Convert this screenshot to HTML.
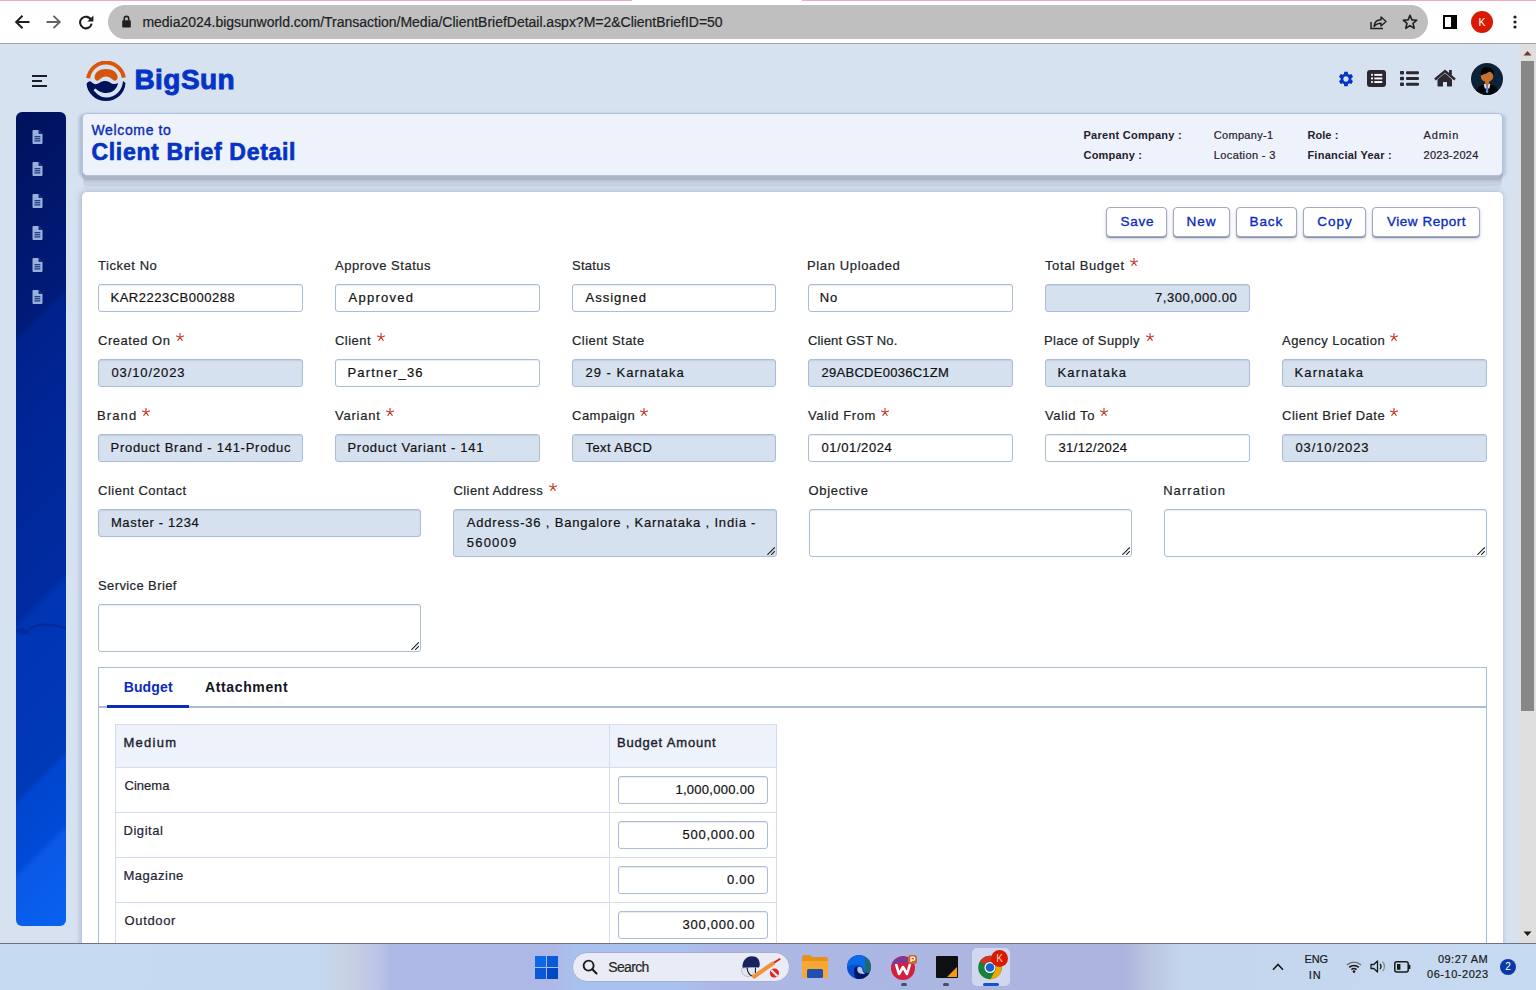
<!DOCTYPE html>
<html><head><meta charset="utf-8">
<style>
*{box-sizing:border-box}
html,body{margin:0;padding:0}
body{width:1536px;height:990px;overflow:hidden;position:relative;background:#d6e2f0;font-family:"Liberation Sans",sans-serif;color:#1f2433}
.a{position:absolute}
.t{position:absolute;white-space:nowrap;line-height:1;}
#chrome{left:0;top:0;width:1536px;height:44px;background:#fff;border-bottom:1px solid #a3a3a3}
#page{left:0;top:44px;width:1519px;height:899px;overflow:hidden;background:#d6e2f0}
</style></head>
<body>
<div id="page" class="a"><div class="a" style="left:0;top:-44px;width:1519px;height:943px">
<!-- hamburger -->
  <div class="a" style="left:32px;top:75px;width:15px;height:2px;background:#1c1b26"></div>
  <div class="a" style="left:32px;top:80px;width:10px;height:2px;background:#1c1b26"></div>
  <div class="a" style="left:32px;top:85px;width:15px;height:2px;background:#1c1b26"></div>
  <!-- logo -->
  <svg class="a" style="left:86px;top:61px" width="40" height="40" viewBox="0 0 40 40">
    <path d="M2.2 17.2 A18 18 0 0 1 37.8 16.6" fill="none" stroke="#d9560b" stroke-width="4"/>
    <path d="M8.6 16.5 C8.6 11.2 13.5 8 20 8 C26.5 8 31.6 11.2 31.6 16.5 C31.6 19 29.6 20 28 19.5 C26 18.8 24 15.6 20 15.6 C16 15.6 14 18.8 12.2 19.5 C10.6 20 8.6 19 8.6 16.5Z" fill="#d4560a"/>
    <path d="M0.5 23 C2 20.5 4 19.5 5.5 21 C8 23.5 10 24 14 21.5 C17 19.5 21 19.5 24 21.5 C27 23.5 29.5 23.5 32 22 C31.5 27 27 32 20 32 C15 32 11.5 29.5 9.5 27.5 L7.5 29 C10.5 33 15 36.5 20 36.5 C29.5 36.5 36.5 29 37 20 L39.5 22 C39 32.5 30.5 40 20 40 C9.5 40 1.5 32.5 0.5 23Z" fill="#00135a"/>
  </svg>
  
  <!-- right icons -->
  <svg class="a" style="left:1337px;top:70px" width="18" height="18" viewBox="0 0 24 24"><path fill="#0433c8" d="M19.14 12.94c.04-.3.06-.61.06-.94 0-.32-.02-.64-.07-.94l2.03-1.58a.49.49 0 0 0 .12-.61l-1.92-3.32a.488.488 0 0 0-.59-.22l-2.39.96c-.5-.38-1.03-.7-1.62-.94l-.36-2.54a.484.484 0 0 0-.48-.41h-3.84c-.24 0-.43.17-.47.41l-.36 2.54c-.59.24-1.13.57-1.62.94l-2.39-.96c-.22-.08-.47 0-.59.22L2.74 8.87c-.12.21-.08.47.12.61l2.03 1.58c-.05.3-.09.63-.09.94s.02.64.07.94l-2.03 1.58a.49.49 0 0 0-.12.61l1.92 3.32c.12.22.37.29.59.22l2.39-.96c.5.38 1.03.7 1.62.94l.36 2.54c.05.24.24.41.48.41h3.84c.24 0 .44-.17.47-.41l.36-2.54c.59-.24 1.13-.56 1.62-.94l2.39.96c.22.08.47 0 .59-.22l1.92-3.32c.12-.22.07-.47-.12-.61l-2.01-1.58zM12 15.6c-1.98 0-3.6-1.62-3.6-3.6s1.62-3.6 3.6-3.6 3.6 1.62 3.6 3.6-1.62 3.6-3.6 3.6z"/></svg>
  <svg class="a" style="left:1367px;top:70px" width="19" height="17" viewBox="0 0 19 17"><rect x="0" y="0" width="19" height="17" rx="3" fill="#2b2830"/><circle cx="5" cy="4.8" r="1.1" fill="#fff"/><circle cx="5" cy="8.4" r="1.1" fill="#fff"/><circle cx="5" cy="12" r="1.1" fill="#fff"/><rect x="7.3" y="3.9" width="8" height="1.9" fill="#fff"/><rect x="7.3" y="7.5" width="8" height="1.9" fill="#fff"/><rect x="7.3" y="11.1" width="8" height="1.9" fill="#fff"/></svg>
  <svg class="a" style="left:1400px;top:71px" width="19" height="15" viewBox="0 0 19 15"><rect x="0" y="0" width="4" height="3.5" rx=".8" fill="#2b2830"/><rect x="0" y="5.8" width="4" height="3.5" rx=".8" fill="#2b2830"/><rect x="0" y="11.5" width="4" height="3.5" rx=".8" fill="#2b2830"/><rect x="6" y="0.2" width="13" height="3" rx="1.2" fill="#2b2830"/><rect x="6" y="6" width="13" height="3" rx="1.2" fill="#2b2830"/><rect x="6" y="11.8" width="13" height="3" rx="1.2" fill="#2b2830"/></svg>
  <svg class="a" style="left:1434px;top:69px" width="22" height="18" viewBox="0 0 22 18"><path d="M1 10.5 L11 2 L21 10.5" fill="none" stroke="#2b2830" stroke-width="2.4"/><rect x="15" y="1" width="2.8" height="6" fill="#2b2830"/><path d="M3.5 10.5 L11 4.3 L18 10.5 V16.8 Q18 17.6 17.2 17.6 H13 V13 H9 V17.6 H4.3 Q3.5 17.6 3.5 16.8Z" fill="#2b2830"/></svg>
  <svg class="a" style="left:1471px;top:63px" width="32" height="32" viewBox="0 0 32 32">
    <defs><clipPath id="av"><circle cx="16" cy="16" r="16"/></clipPath></defs>
    <circle cx="16" cy="16" r="16" fill="#0b2239"/>
    <g clip-path="url(#av)">
      <path d="M4.5 33 C4.5 25.5 8 22.2 13 21.6 L19 21.6 C24 22.2 27.5 25.5 27.5 33Z" fill="#050505"/>
      <rect x="14" y="16" width="4.2" height="7" fill="#c46a2c"/>
      <path d="M12.8 21.2 L14.2 20.8 L16.1 24.5 L18 20.8 L19.3 21.2 L18.4 25.5 L13.8 25.5Z" fill="#e6e6e6"/>
      <path d="M15.2 22.5 H17 L17.4 29 L16.1 30.5 L14.8 29Z" fill="#5a8ad2"/>
      <ellipse cx="16" cy="13.4" rx="6.2" ry="5.4" fill="#c87030"/>
      <path d="M10 12.2 C9.2 6.5 12 4 16.2 4 C20.5 4 23.2 6.8 22.6 12 C21.6 9.8 20.2 8.6 18.6 8.4 C17.6 9.6 14.5 10.6 10 12.2Z" fill="#030303"/>
    </g>
  </svg>

  
<div id="t1" class="t" style="left:134.40px;top:66.00px;font-size:28px;color:#0433c8;font-weight:bold;letter-spacing:0.463px;-webkit-text-stroke:0.9px #0433c8;">BigSun</div>
<!-- sidebar -->
  <div class="a" style="left:16px;top:112px;width:50px;height:814px;border-radius:6px;background:linear-gradient(135deg,#00125c 0%,#00176c 15%,#001b7a 26%,#00218c 26.8%,#00289a 45%,#002ca2 59%,#0034b2 60%,#003ab6 79.5%,#0046ce 80.5%,#004bd6 88%,#0a58e6 89%,#0a62f0 100%)"></div>
  <svg class="a" style="left:16px;top:615px" width="50" height="30" viewBox="0 0 50 30"><path d="M0 17 C3 14 6 13 8 16 C10 19 12 17 14 14 C20 9 32 8 50 13" fill="none" stroke="#002a98" stroke-width="2.2" opacity=".8"/><ellipse cx="7" cy="17" rx="4" ry="3" fill="#002a98" opacity=".6"/></svg>
  <svg class="a" style="left:32px;top:130px" width="11" height="174" viewBox="0 0 11 174">
    <defs><g id="doc"><path d="M0.8 0 H6.5 L10.5 4 V13 Q10.5 14 9.5 14 H1.5 Q0.5 14 0.5 13 V1 Q0.5 0 1.5 0Z" fill="#98b0dc"/><path d="M6.5 0 V3.2 Q6.5 4 7.3 4 H10.5Z" fill="#0d2a7a"/><rect x="2.5" y="6.2" width="5.8" height="1.05" fill="#0b2070"/><rect x="2.5" y="8.3" width="5.8" height="1.05" fill="#0b2070"/><rect x="2.5" y="10.4" width="5.8" height="1.05" fill="#0b2070"/></g></defs>
    <use href="#doc" y="0"/><use href="#doc" y="32"/><use href="#doc" y="64"/><use href="#doc" y="96"/><use href="#doc" y="128"/><use href="#doc" y="160"/>
  </svg>

  
<div class="a" style="left:82px;top:113px;width:1421px;height:63px;border-radius:5px;background:#eef2fa;border:1px solid #b0c2e0;box-shadow:0 4px 0 #abb3c5,0 7px 0 -1px #bcc6da,0 11px 0 -1px #c6d2e2,0 15px 0 -2px #d0dcea,-3px 1px 3px rgba(120,135,170,.4),3px 1px 3px rgba(120,135,170,.3)"></div>
<div id="t2" class="t" style="left:91.50px;top:123.15px;font-size:14px;color:#0a2bb8;font-weight:normal;letter-spacing:0.637px;-webkit-text-stroke:0.35px #0a2bb8;">Welcome to</div>
<div id="t3" class="t" style="left:91.50px;top:140.83px;font-size:23px;color:#0633c4;font-weight:bold;letter-spacing:0.677px;-webkit-text-stroke:0.7px #0633c4;">Client Brief Detail</div>
<div id="t4" class="t" style="left:1083.50px;top:129.79px;font-size:11px;color:#1f2030;font-weight:bold;letter-spacing:0.269px;">Parent Company :</div>
<div id="t5" class="t" style="left:1083.50px;top:149.59px;font-size:11px;color:#1f2030;font-weight:bold;letter-spacing:0.203px;">Company :</div>
<div id="t6" class="t" style="left:1213.80px;top:129.79px;font-size:11px;color:#1f2030;font-weight:normal;letter-spacing:0.307px;-webkit-text-stroke:0.2px #1f2030;">Company-1</div>
<div id="t7" class="t" style="left:1213.80px;top:149.59px;font-size:11px;color:#1f2030;font-weight:normal;letter-spacing:0.376px;-webkit-text-stroke:0.2px #1f2030;">Location - 3</div>
<div id="t8" class="t" style="left:1307.40px;top:129.79px;font-size:11px;color:#1f2030;font-weight:bold;letter-spacing:0.081px;">Role :</div>
<div id="t9" class="t" style="left:1307.40px;top:149.59px;font-size:11px;color:#1f2030;font-weight:bold;letter-spacing:0.257px;">Financial Year :</div>
<div id="t10" class="t" style="left:1423.60px;top:129.79px;font-size:11px;color:#1f2030;font-weight:normal;letter-spacing:0.885px;-webkit-text-stroke:0.2px #1f2030;">Admin</div>
<div id="t11" class="t" style="left:1423.60px;top:149.59px;font-size:11px;color:#1f2030;font-weight:normal;letter-spacing:0.264px;-webkit-text-stroke:0.2px #1f2030;">2023-2024</div>
<div class="a" style="left:82px;top:192px;width:1421px;height:800px;border-radius:5px;background:#fff;box-shadow:-1px 0 5px 1px rgba(115,130,165,.38)"></div>
<div class="a" style="left:1106px;top:207px;width:61px;height:30px;border:1px solid #a3aabb;border-radius:4px;background:#fff;box-shadow:0 1px 1px rgba(60,65,80,.55),0 3px 4px rgba(120,140,190,.25)"></div>
<div id="t12" class="t" style="left:1120.50px;top:214.77px;font-size:13.5px;color:#0a2bc0;font-weight:normal;letter-spacing:0.713px;-webkit-text-stroke:0.35px #0a2bc0;">Save</div>
<div class="a" style="left:1173px;top:207px;width:57px;height:30px;border:1px solid #a3aabb;border-radius:4px;background:#fff;box-shadow:0 1px 1px rgba(60,65,80,.55),0 3px 4px rgba(120,140,190,.25)"></div>
<div id="t13" class="t" style="left:1186.48px;top:214.77px;font-size:13.5px;color:#0a2bc0;font-weight:normal;letter-spacing:1.000px;-webkit-text-stroke:0.35px #0a2bc0;">New</div>
<div class="a" style="left:1236px;top:207px;width:61px;height:30px;border:1px solid #a3aabb;border-radius:4px;background:#fff;box-shadow:0 1px 1px rgba(60,65,80,.55),0 3px 4px rgba(120,140,190,.25)"></div>
<div id="t14" class="t" style="left:1249.60px;top:214.77px;font-size:13.5px;color:#0a2bc0;font-weight:normal;letter-spacing:0.879px;-webkit-text-stroke:0.35px #0a2bc0;">Back</div>
<div class="a" style="left:1303px;top:207px;width:63px;height:30px;border:1px solid #a3aabb;border-radius:4px;background:#fff;box-shadow:0 1px 1px rgba(60,65,80,.55),0 3px 4px rgba(120,140,190,.25)"></div>
<div id="t15" class="t" style="left:1317.20px;top:214.77px;font-size:13.5px;color:#0a2bc0;font-weight:normal;letter-spacing:0.978px;-webkit-text-stroke:0.35px #0a2bc0;">Copy</div>
<div class="a" style="left:1372px;top:207px;width:108px;height:30px;border:1px solid #a3aabb;border-radius:4px;background:#fff;box-shadow:0 1px 1px rgba(60,65,80,.55),0 3px 4px rgba(120,140,190,.25)"></div>
<div id="t16" class="t" style="left:1387.00px;top:214.77px;font-size:13.5px;color:#0a2bc0;font-weight:normal;letter-spacing:0.526px;-webkit-text-stroke:0.35px #0a2bc0;">View Report</div>
<div id="t17" class="t" style="left:98.00px;top:259.00px;font-size:13px;color:#212529;font-weight:normal;letter-spacing:0.551px;-webkit-text-stroke:0.2px #212529;">Ticket No</div>
<div class="a" style="left:98px;top:284px;width:205px;height:28px;border:1px solid #a9bcda;border-radius:3px;background:#fff;box-shadow:inset 0 1px 1px rgba(0,0,0,.08);"></div>
<div id="t18" class="t" style="left:110.50px;top:291.00px;font-size:13px;color:#111111;font-weight:normal;letter-spacing:0.510px;-webkit-text-stroke:0.2px #111111;">KAR2223CB000288</div>
<div id="t19" class="t" style="left:335.00px;top:259.00px;font-size:13px;color:#212529;font-weight:normal;letter-spacing:0.509px;-webkit-text-stroke:0.2px #212529;">Approve Status</div>
<div class="a" style="left:335px;top:284px;width:205px;height:28px;border:1px solid #a9bcda;border-radius:3px;background:#fff;box-shadow:inset 0 1px 1px rgba(0,0,0,.08);"></div>
<div id="t20" class="t" style="left:348.50px;top:291.00px;font-size:13px;color:#111111;font-weight:normal;letter-spacing:1.269px;-webkit-text-stroke:0.2px #111111;">Approved</div>
<div id="t21" class="t" style="left:572.00px;top:259.00px;font-size:13px;color:#212529;font-weight:normal;letter-spacing:0.269px;-webkit-text-stroke:0.2px #212529;">Status</div>
<div class="a" style="left:572px;top:284px;width:204px;height:28px;border:1px solid #a9bcda;border-radius:3px;background:#fff;box-shadow:inset 0 1px 1px rgba(0,0,0,.08);"></div>
<div id="t22" class="t" style="left:585.50px;top:291.00px;font-size:13px;color:#111111;font-weight:normal;letter-spacing:1.007px;-webkit-text-stroke:0.2px #111111;">Assigned</div>
<div id="t23" class="t" style="left:807.00px;top:259.00px;font-size:13px;color:#212529;font-weight:normal;letter-spacing:0.629px;-webkit-text-stroke:0.2px #212529;">Plan Uploaded</div>
<div class="a" style="left:808px;top:284px;width:205px;height:28px;border:1px solid #a9bcda;border-radius:3px;background:#fff;box-shadow:inset 0 1px 1px rgba(0,0,0,.08);"></div>
<div id="t24" class="t" style="left:819.69px;top:291.00px;font-size:13px;color:#111111;font-weight:normal;letter-spacing:1.000px;-webkit-text-stroke:0.2px #111111;">No</div>
<div id="t25" class="t" style="left:1045.00px;top:259.00px;font-size:13px;color:#212529;font-weight:normal;letter-spacing:0.612px;-webkit-text-stroke:0.2px #212529;">Total Budget</div>
<svg class="a" style="left:1130px;top:258px" width="8" height="8" viewBox="0 0 8 8"><path d="M4 0.4 V4.2 M4 4.2 L7.6 3 M4 4.2 L6.2 7.4 M4 4.2 L1.8 7.4 M4 4.2 L0.4 3" stroke="#c0392b" stroke-width="1.1" stroke-linecap="round"/></svg>
<div class="a" style="left:1045px;top:284px;width:205px;height:28px;border:1px solid #a9bcda;border-radius:3px;background:#d6e1f0;box-shadow:inset 0 1px 1px rgba(0,0,0,.08);"></div>
<div id="t26" class="t" style="left:837.26px;width:400px;text-align:right;top:291.00px;font-size:13px;color:#111111;font-weight:normal;letter-spacing:0.530px;-webkit-text-stroke:0.2px #111111;">7,300,000.00</div>
<div id="t27" class="t" style="left:98.00px;top:334.00px;font-size:13px;color:#212529;font-weight:normal;letter-spacing:0.525px;-webkit-text-stroke:0.2px #212529;">Created On</div>
<svg class="a" style="left:176px;top:333px" width="8" height="8" viewBox="0 0 8 8"><path d="M4 0.4 V4.2 M4 4.2 L7.6 3 M4 4.2 L6.2 7.4 M4 4.2 L1.8 7.4 M4 4.2 L0.4 3" stroke="#c0392b" stroke-width="1.1" stroke-linecap="round"/></svg>
<div class="a" style="left:98px;top:359px;width:205px;height:28px;border:1px solid #a9bcda;border-radius:3px;background:#d6e1f0;box-shadow:inset 0 1px 1px rgba(0,0,0,.08);"></div>
<div id="t28" class="t" style="left:111.50px;top:366.00px;font-size:13px;color:#111111;font-weight:normal;letter-spacing:0.885px;-webkit-text-stroke:0.2px #111111;">03/10/2023</div>
<div id="t29" class="t" style="left:335.00px;top:334.00px;font-size:13px;color:#212529;font-weight:normal;letter-spacing:0.475px;-webkit-text-stroke:0.2px #212529;">Client</div>
<svg class="a" style="left:377px;top:333px" width="8" height="8" viewBox="0 0 8 8"><path d="M4 0.4 V4.2 M4 4.2 L7.6 3 M4 4.2 L6.2 7.4 M4 4.2 L1.8 7.4 M4 4.2 L0.4 3" stroke="#c0392b" stroke-width="1.1" stroke-linecap="round"/></svg>
<div class="a" style="left:335px;top:359px;width:205px;height:28px;border:1px solid #a9bcda;border-radius:3px;background:#fff;box-shadow:inset 0 1px 1px rgba(0,0,0,.08);"></div>
<div id="t30" class="t" style="left:347.50px;top:366.00px;font-size:13px;color:#111111;font-weight:normal;letter-spacing:1.190px;-webkit-text-stroke:0.2px #111111;">Partner_36</div>
<div id="t31" class="t" style="left:572.00px;top:334.00px;font-size:13px;color:#212529;font-weight:normal;letter-spacing:0.448px;-webkit-text-stroke:0.2px #212529;">Client State</div>
<div class="a" style="left:572px;top:359px;width:204px;height:28px;border:1px solid #a9bcda;border-radius:3px;background:#d6e1f0;box-shadow:inset 0 1px 1px rgba(0,0,0,.08);"></div>
<div id="t32" class="t" style="left:585.50px;top:366.00px;font-size:13px;color:#111111;font-weight:normal;letter-spacing:0.997px;-webkit-text-stroke:0.2px #111111;">29 - Karnataka</div>
<div id="t33" class="t" style="left:808.00px;top:334.00px;font-size:13px;color:#212529;font-weight:normal;letter-spacing:0.169px;-webkit-text-stroke:0.2px #212529;">Client GST No.</div>
<div class="a" style="left:808px;top:359px;width:205px;height:28px;border:1px solid #a9bcda;border-radius:3px;background:#d6e1f0;box-shadow:inset 0 1px 1px rgba(0,0,0,.08);"></div>
<div id="t34" class="t" style="left:821.50px;top:366.00px;font-size:13px;color:#111111;font-weight:normal;letter-spacing:0.269px;-webkit-text-stroke:0.2px #111111;">29ABCDE0036C1ZM</div>
<div id="t35" class="t" style="left:1044.00px;top:334.00px;font-size:13px;color:#212529;font-weight:normal;letter-spacing:0.362px;-webkit-text-stroke:0.2px #212529;">Place of Supply</div>
<svg class="a" style="left:1146px;top:333px" width="8" height="8" viewBox="0 0 8 8"><path d="M4 0.4 V4.2 M4 4.2 L7.6 3 M4 4.2 L6.2 7.4 M4 4.2 L1.8 7.4 M4 4.2 L0.4 3" stroke="#c0392b" stroke-width="1.1" stroke-linecap="round"/></svg>
<div class="a" style="left:1045px;top:359px;width:205px;height:28px;border:1px solid #a9bcda;border-radius:3px;background:#d6e1f0;box-shadow:inset 0 1px 1px rgba(0,0,0,.08);"></div>
<div id="t36" class="t" style="left:1057.50px;top:366.00px;font-size:13px;color:#111111;font-weight:normal;letter-spacing:1.159px;-webkit-text-stroke:0.2px #111111;">Karnataka</div>
<div id="t37" class="t" style="left:1282.00px;top:334.00px;font-size:13px;color:#212529;font-weight:normal;letter-spacing:0.465px;-webkit-text-stroke:0.2px #212529;">Agency Location</div>
<svg class="a" style="left:1390px;top:333px" width="8" height="8" viewBox="0 0 8 8"><path d="M4 0.4 V4.2 M4 4.2 L7.6 3 M4 4.2 L6.2 7.4 M4 4.2 L1.8 7.4 M4 4.2 L0.4 3" stroke="#c0392b" stroke-width="1.1" stroke-linecap="round"/></svg>
<div class="a" style="left:1282px;top:359px;width:205px;height:28px;border:1px solid #a9bcda;border-radius:3px;background:#d6e1f0;box-shadow:inset 0 1px 1px rgba(0,0,0,.08);"></div>
<div id="t38" class="t" style="left:1294.50px;top:366.00px;font-size:13px;color:#111111;font-weight:normal;letter-spacing:1.159px;-webkit-text-stroke:0.2px #111111;">Karnataka</div>
<div id="t39" class="t" style="left:97.00px;top:409.00px;font-size:13px;color:#212529;font-weight:normal;letter-spacing:1.110px;-webkit-text-stroke:0.2px #212529;">Brand</div>
<svg class="a" style="left:142px;top:408px" width="8" height="8" viewBox="0 0 8 8"><path d="M4 0.4 V4.2 M4 4.2 L7.6 3 M4 4.2 L6.2 7.4 M4 4.2 L1.8 7.4 M4 4.2 L0.4 3" stroke="#c0392b" stroke-width="1.1" stroke-linecap="round"/></svg>
<div class="a" style="left:98px;top:434px;width:205px;height:28px;border:1px solid #a9bcda;border-radius:3px;background:#d6e1f0;box-shadow:inset 0 1px 1px rgba(0,0,0,.08);"></div>
<div id="t40" class="t" style="left:110.50px;top:441.00px;font-size:13px;color:#111111;font-weight:normal;letter-spacing:0.725px;-webkit-text-stroke:0.2px #111111;">Product Brand - 141-Produc</div>
<div id="t41" class="t" style="left:335.00px;top:409.00px;font-size:13px;color:#212529;font-weight:normal;letter-spacing:0.781px;-webkit-text-stroke:0.2px #212529;">Variant</div>
<svg class="a" style="left:386px;top:408px" width="8" height="8" viewBox="0 0 8 8"><path d="M4 0.4 V4.2 M4 4.2 L7.6 3 M4 4.2 L6.2 7.4 M4 4.2 L1.8 7.4 M4 4.2 L0.4 3" stroke="#c0392b" stroke-width="1.1" stroke-linecap="round"/></svg>
<div class="a" style="left:335px;top:434px;width:205px;height:28px;border:1px solid #a9bcda;border-radius:3px;background:#d6e1f0;box-shadow:inset 0 1px 1px rgba(0,0,0,.08);"></div>
<div id="t42" class="t" style="left:347.50px;top:441.00px;font-size:13px;color:#111111;font-weight:normal;letter-spacing:0.702px;-webkit-text-stroke:0.2px #111111;">Product Variant - 141</div>
<div id="t43" class="t" style="left:572.00px;top:409.00px;font-size:13px;color:#212529;font-weight:normal;letter-spacing:0.496px;-webkit-text-stroke:0.2px #212529;">Campaign</div>
<svg class="a" style="left:640px;top:408px" width="8" height="8" viewBox="0 0 8 8"><path d="M4 0.4 V4.2 M4 4.2 L7.6 3 M4 4.2 L6.2 7.4 M4 4.2 L1.8 7.4 M4 4.2 L0.4 3" stroke="#c0392b" stroke-width="1.1" stroke-linecap="round"/></svg>
<div class="a" style="left:572px;top:434px;width:204px;height:28px;border:1px solid #a9bcda;border-radius:3px;background:#d6e1f0;box-shadow:inset 0 1px 1px rgba(0,0,0,.08);"></div>
<div id="t44" class="t" style="left:585.50px;top:441.00px;font-size:13px;color:#111111;font-weight:normal;letter-spacing:0.427px;-webkit-text-stroke:0.2px #111111;">Text ABCD</div>
<div id="t45" class="t" style="left:808.00px;top:409.00px;font-size:13px;color:#212529;font-weight:normal;letter-spacing:0.616px;-webkit-text-stroke:0.2px #212529;">Valid From</div>
<svg class="a" style="left:881px;top:408px" width="8" height="8" viewBox="0 0 8 8"><path d="M4 0.4 V4.2 M4 4.2 L7.6 3 M4 4.2 L6.2 7.4 M4 4.2 L1.8 7.4 M4 4.2 L0.4 3" stroke="#c0392b" stroke-width="1.1" stroke-linecap="round"/></svg>
<div class="a" style="left:808px;top:434px;width:205px;height:28px;border:1px solid #a9bcda;border-radius:3px;background:#fff;box-shadow:inset 0 1px 1px rgba(0,0,0,.08);"></div>
<div id="t46" class="t" style="left:821.50px;top:441.00px;font-size:13px;color:#111111;font-weight:normal;letter-spacing:0.574px;-webkit-text-stroke:0.2px #111111;">01/01/2024</div>
<div id="t47" class="t" style="left:1045.00px;top:409.00px;font-size:13px;color:#212529;font-weight:normal;letter-spacing:0.621px;-webkit-text-stroke:0.2px #212529;">Valid To</div>
<svg class="a" style="left:1100px;top:408px" width="8" height="8" viewBox="0 0 8 8"><path d="M4 0.4 V4.2 M4 4.2 L7.6 3 M4 4.2 L6.2 7.4 M4 4.2 L1.8 7.4 M4 4.2 L0.4 3" stroke="#c0392b" stroke-width="1.1" stroke-linecap="round"/></svg>
<div class="a" style="left:1045px;top:434px;width:205px;height:28px;border:1px solid #a9bcda;border-radius:3px;background:#fff;box-shadow:inset 0 1px 1px rgba(0,0,0,.08);"></div>
<div id="t48" class="t" style="left:1058.50px;top:441.00px;font-size:13px;color:#111111;font-weight:normal;letter-spacing:0.385px;-webkit-text-stroke:0.2px #111111;">31/12/2024</div>
<div id="t49" class="t" style="left:1282.00px;top:409.00px;font-size:13px;color:#212529;font-weight:normal;letter-spacing:0.499px;-webkit-text-stroke:0.2px #212529;">Client Brief Date</div>
<svg class="a" style="left:1390px;top:408px" width="8" height="8" viewBox="0 0 8 8"><path d="M4 0.4 V4.2 M4 4.2 L7.6 3 M4 4.2 L6.2 7.4 M4 4.2 L1.8 7.4 M4 4.2 L0.4 3" stroke="#c0392b" stroke-width="1.1" stroke-linecap="round"/></svg>
<div class="a" style="left:1282px;top:434px;width:205px;height:28px;border:1px solid #a9bcda;border-radius:3px;background:#d6e1f0;box-shadow:inset 0 1px 1px rgba(0,0,0,.08);"></div>
<div id="t50" class="t" style="left:1295.50px;top:441.00px;font-size:13px;color:#111111;font-weight:normal;letter-spacing:0.885px;-webkit-text-stroke:0.2px #111111;">03/10/2023</div>
<div id="t51" class="t" style="left:98.00px;top:484.00px;font-size:13px;color:#212529;font-weight:normal;letter-spacing:0.505px;-webkit-text-stroke:0.2px #212529;">Client Contact</div>
<div class="a" style="left:98px;top:509px;width:323px;height:28px;border:1px solid #a9bcda;border-radius:3px;background:#d6e1f0;box-shadow:inset 0 1px 1px rgba(0,0,0,.08)"></div>
<div id="t52" class="t" style="left:110.90px;top:516.00px;font-size:13px;color:#111111;font-weight:normal;letter-spacing:0.644px;-webkit-text-stroke:0.2px #111111;">Master - 1234</div>
<div id="t53" class="t" style="left:453.50px;top:484.00px;font-size:13px;color:#212529;font-weight:normal;letter-spacing:0.412px;-webkit-text-stroke:0.2px #212529;">Client Address</div>
<svg class="a" style="left:549px;top:483px" width="8" height="8" viewBox="0 0 8 8"><path d="M4 0.4 V4.2 M4 4.2 L7.6 3 M4 4.2 L6.2 7.4 M4 4.2 L1.8 7.4 M4 4.2 L0.4 3" stroke="#c0392b" stroke-width="1.1" stroke-linecap="round"/></svg>
<div class="a" style="left:453px;top:509px;width:324px;height:48px;border:1px solid #a9bcda;border-radius:3px;background:#d6e1f0;box-shadow:inset 0 1px 1px rgba(0,0,0,.08)"></div>
<div id="t54" class="t" style="left:466.80px;top:515.90px;font-size:13px;color:#111111;font-weight:normal;letter-spacing:0.814px;-webkit-text-stroke:0.2px #111111;">Address-36 , Bangalore , Karnataka , India -</div>
<div id="t55" class="t" style="left:466.80px;top:535.70px;font-size:13px;color:#111111;font-weight:normal;letter-spacing:1.210px;-webkit-text-stroke:0.2px #111111;">560009</div>
<svg class="a" style="left:767px;top:547px" width="8" height="8" viewBox="0 0 8 8"><path d="M7.8 0.4 L0.4 7.8 M7.8 4.2 L4.2 7.8" stroke="#1a1a1a" stroke-width="1.1"/></svg>
<div id="t56" class="t" style="left:808.60px;top:484.00px;font-size:13px;color:#212529;font-weight:normal;letter-spacing:0.643px;-webkit-text-stroke:0.2px #212529;">Objective</div>
<div class="a" style="left:809px;top:509px;width:323px;height:48px;border:1px solid #a9bcda;border-radius:3px;background:#fff;box-shadow:inset 0 1px 1px rgba(0,0,0,.08)"></div>
<svg class="a" style="left:1122px;top:547px" width="8" height="8" viewBox="0 0 8 8"><path d="M7.8 0.4 L0.4 7.8 M7.8 4.2 L4.2 7.8" stroke="#1a1a1a" stroke-width="1.1"/></svg>
<div id="t57" class="t" style="left:1163.20px;top:484.00px;font-size:13px;color:#212529;font-weight:normal;letter-spacing:1.045px;-webkit-text-stroke:0.2px #212529;">Narration</div>
<div class="a" style="left:1164px;top:509px;width:323px;height:48px;border:1px solid #a9bcda;border-radius:3px;background:#fff;box-shadow:inset 0 1px 1px rgba(0,0,0,.08)"></div>
<svg class="a" style="left:1477px;top:547px" width="8" height="8" viewBox="0 0 8 8"><path d="M7.8 0.4 L0.4 7.8 M7.8 4.2 L4.2 7.8" stroke="#1a1a1a" stroke-width="1.1"/></svg>
<div id="t58" class="t" style="left:98.00px;top:579.00px;font-size:13px;color:#212529;font-weight:normal;letter-spacing:0.393px;-webkit-text-stroke:0.2px #212529;">Service Brief</div>
<div class="a" style="left:98px;top:604px;width:323px;height:48px;border:1px solid #a9bcda;border-radius:3px;background:#fff;box-shadow:inset 0 1px 1px rgba(0,0,0,.08)"></div>
<svg class="a" style="left:411px;top:642px" width="8" height="8" viewBox="0 0 8 8"><path d="M7.8 0.4 L0.4 7.8 M7.8 4.2 L4.2 7.8" stroke="#1a1a1a" stroke-width="1.1"/></svg>
<div class="a" style="left:98px;top:667px;width:1389px;height:300px;border:1px solid #a9bcda;border-bottom:none"></div>
<div class="a" style="left:99px;top:706px;width:1387px;height:2px;background:#a9bcda"></div>
<div class="a" style="left:107px;top:705px;width:82px;height:3px;background:#0a2bc0"></div>
<div id="t59" class="t" style="left:123.70px;top:680.25px;font-size:14px;color:#0a2bc0;font-weight:bold;letter-spacing:0.130px;">Budget</div>
<div id="t60" class="t" style="left:205.00px;top:680.25px;font-size:14px;color:#15151f;font-weight:bold;letter-spacing:0.628px;">Attachment</div>
<div class="a" style="left:115px;top:724px;width:662px;height:44px;background:#eef2fa;border:1px solid #d3ddef"></div>
<div class="a" style="left:115px;top:767px;width:662px;height:200px;border-left:1px solid #d3ddef;border-right:1px solid #d3ddef"></div>
<div class="a" style="left:609px;top:724px;width:1px;height:240px;background:#d3ddef"></div>
<div class="a" style="left:115px;top:812px;width:662px;height:1px;background:#d3ddef"></div>
<div class="a" style="left:115px;top:857px;width:662px;height:1px;background:#d3ddef"></div>
<div class="a" style="left:115px;top:902px;width:662px;height:1px;background:#d3ddef"></div>
<div id="t61" class="t" style="left:123.50px;top:736.00px;font-size:13px;color:#1f2433;font-weight:normal;letter-spacing:1.259px;-webkit-text-stroke:0.4px #1f2433;">Medium</div>
<div id="t62" class="t" style="left:616.90px;top:736.00px;font-size:13px;color:#1f2433;font-weight:normal;letter-spacing:0.825px;-webkit-text-stroke:0.4px #1f2433;">Budget Amount</div>
<div id="t63" class="t" style="left:124.50px;top:778.70px;font-size:13px;color:#1f2433;font-weight:normal;letter-spacing:0.027px;-webkit-text-stroke:0.2px #1f2433;">Cinema</div>
<div class="a" style="left:618px;top:776px;width:150px;height:28px;border:1px solid #a9bcda;border-radius:3px;background:#fff;box-shadow:inset 0 1px 1px rgba(0,0,0,.08)"></div>
<div id="t64" class="t" style="left:354.71px;width:400px;text-align:right;top:783.10px;font-size:13px;color:#111111;font-weight:normal;letter-spacing:0.284px;-webkit-text-stroke:0.2px #111111;">1,000,000.00</div>
<div id="t65" class="t" style="left:123.50px;top:823.70px;font-size:13px;color:#1f2433;font-weight:normal;letter-spacing:0.544px;-webkit-text-stroke:0.2px #1f2433;">Digital</div>
<div class="a" style="left:618px;top:821px;width:150px;height:28px;border:1px solid #a9bcda;border-radius:3px;background:#fff;box-shadow:inset 0 1px 1px rgba(0,0,0,.08)"></div>
<div id="t66" class="t" style="left:355.20px;width:400px;text-align:right;top:828.10px;font-size:13px;color:#111111;font-weight:normal;letter-spacing:0.774px;-webkit-text-stroke:0.2px #111111;">500,000.00</div>
<div id="t67" class="t" style="left:123.50px;top:868.70px;font-size:13px;color:#1f2433;font-weight:normal;letter-spacing:0.495px;-webkit-text-stroke:0.2px #1f2433;">Magazine</div>
<div class="a" style="left:618px;top:866px;width:150px;height:28px;border:1px solid #a9bcda;border-radius:3px;background:#fff;box-shadow:inset 0 1px 1px rgba(0,0,0,.08)"></div>
<div id="t68" class="t" style="left:355.14px;width:400px;text-align:right;top:873.10px;font-size:13px;color:#111111;font-weight:normal;letter-spacing:0.709px;-webkit-text-stroke:0.2px #111111;">0.00</div>
<div id="t69" class="t" style="left:124.50px;top:913.70px;font-size:13px;color:#1f2433;font-weight:normal;letter-spacing:0.659px;-webkit-text-stroke:0.2px #1f2433;">Outdoor</div>
<div class="a" style="left:618px;top:911px;width:150px;height:28px;border:1px solid #a9bcda;border-radius:3px;background:#fff;box-shadow:inset 0 1px 1px rgba(0,0,0,.08)"></div>
<div id="t70" class="t" style="left:355.20px;width:400px;text-align:right;top:918.10px;font-size:13px;color:#111111;font-weight:normal;letter-spacing:0.774px;-webkit-text-stroke:0.2px #111111;">300,000.00</div>
</div></div>
<div id="chrome" class="a">
<div class="a" style="left:0px;top:0px;width:632px;height:1px;background:#f2a6c9"></div>
<div class="a" style="left:802px;top:0px;width:734px;height:1px;background:#f2a6c9"></div>
<div class="a" style="left:108px;top:5px;width:1320px;height:34px;border-radius:17px;background:#bfbfbf"></div>
<div id="t71" class="t" style="left:142.40px;top:15.05px;font-size:14px;color:#202124;font-weight:normal;letter-spacing:-0.015px;-webkit-text-stroke:0.2px #202124;">media2024.bigsunworld.com/Transaction/Media/ClientBriefDetail.aspx?M=2&amp;ClientBriefID=50</div>
<!-- nav icons -->
  <svg class="a" style="left:14px;top:14px" width="16" height="16" viewBox="0 0 16 16"><path d="M15.5 8 H2.5 M8.5 1.8 L2.2 8 L8.5 14.2" fill="none" stroke="#1f1f1f" stroke-width="2"/></svg>
  <svg class="a" style="left:46px;top:14px" width="16" height="16" viewBox="0 0 16 16"><path d="M0.5 8 H13.5 M7.5 1.8 L13.8 8 L7.5 14.2" fill="none" stroke="#5f6368" stroke-width="1.8"/></svg>
  <svg class="a" style="left:78px;top:14px" width="16" height="16" viewBox="0 0 16 16"><path d="M13.2 6.2 A5.8 5.8 0 1 0 13.6 9.6" fill="none" stroke="#1f1f1f" stroke-width="2.1"/><path d="M15.4 1.6 V7.6 H9.4Z" fill="#1f1f1f"/></svg>
  <svg class="a" style="left:122px;top:15px" width="9" height="13" viewBox="0 0 9 13"><path d="M2.3 5.5 V3.6 A2.2 2.2 0 0 1 6.7 3.6 V5.5" fill="none" stroke="#1f1f1f" stroke-width="1.6"/><rect x="0.2" y="5.3" width="8.6" height="7.2" rx="0.8" fill="#1f1f1f"/></svg>
  <svg class="a" style="left:1370px;top:14px" width="17" height="16" viewBox="0 0 17 16"><path d="M1 8 V14.6 H13" fill="none" stroke="#1f1f1f" stroke-width="1.5"/><path d="M4 12.5 C4.5 8 7.5 5.8 11 5.8 V3 L16 7.5 L11 12 V9.2 C8 9.2 5.8 10.2 4 12.5Z" fill="none" stroke="#1f1f1f" stroke-width="1.4" stroke-linejoin="round"/></svg>
  <svg class="a" style="left:1402px;top:14px" width="16" height="16" viewBox="0 0 16 16"><path d="M8 1.3 L9.9 5.9 L14.8 6.2 L11 9.4 L12.2 14.3 L8 11.6 L3.8 14.3 L5 9.4 L1.2 6.2 L6.1 5.9Z" fill="none" stroke="#1f1f1f" stroke-width="1.6" stroke-linejoin="round"/></svg>
  <svg class="a" style="left:1443px;top:15px" width="14" height="14" viewBox="0 0 14 14"><rect x="1" y="1" width="12" height="12" fill="none" stroke="#000" stroke-width="2"/><rect x="8" y="1" width="5" height="12" fill="#000"/></svg>
  <div class="a" style="left:1471px;top:11px;width:22px;height:22px;border-radius:50%;background:#d91a00;color:#fff;font-size:10.5px;line-height:22px;text-align:center">K</div>
  <svg class="a" style="left:1512px;top:15px" width="6" height="14" viewBox="0 0 6 14"><circle cx="3" cy="2" r="1.6" fill="#1f1f1f"/><circle cx="3" cy="7" r="1.6" fill="#1f1f1f"/><circle cx="3" cy="12" r="1.6" fill="#1f1f1f"/></svg>

</div>
<!-- SCROLLBAR -->
<div class="a" style="left:1519px;top:44px;width:17px;height:899px;background:#dfdfdf"></div>
<div class="a" style="left:1521px;top:61px;width:13px;height:650px;background:#878787"></div>
<svg class="a" style="left:1523px;top:50px" width="9" height="6" viewBox="0 0 9 6"><path d="M0.5 5.5 L4.5 1 L8.5 5.5Z" fill="#6f3a30"/></svg>
<svg class="a" style="left:1523px;top:931px" width="9" height="6" viewBox="0 0 9 6"><path d="M0.5 0.5 L4.5 5 L8.5 0.5Z" fill="#1a1a1a"/></svg>



<div class="a" style="left:0;top:943px;width:1536px;height:1px;background:#6d7380"></div>
<div class="a" style="left:0;top:944px;width:1536px;height:46px;background:linear-gradient(90deg,#c6dbf2 0%,#c4d8f0 20.8%,#c8d2e4 22.5%,#bcc4e6 24.6%,#adb8e6 25.4%,#adb8e6 36.1%,#a9c1ee 37.4%,#a9c1ee 44.3%,#adb8e6 46.2%,#abb5de 73.2%,#bcc6e0 74.9%,#c4d6ee 77.1%,#c6daf2 100%)"></div>
<!-- taskbar items -->
<div class="a" style="left:535px;top:956px;width:23px;height:23px">
  <div class="a" style="left:0;top:0;width:11px;height:11px;background:#0a6ae6"></div>
  <div class="a" style="left:12px;top:0;width:11px;height:11px;background:#0a5ad8"></div>
  <div class="a" style="left:0;top:12px;width:11px;height:11px;background:#0a58d6"></div>
  <div class="a" style="left:12px;top:12px;width:11px;height:11px;background:#0048c4"></div>
</div>
<div class="a" style="left:572px;top:952px;width:218px;height:30px;border-radius:15px;background:#e9ecf6;border:1px solid #a7b0cc"></div>
<svg class="a" style="left:582px;top:959px" width="16" height="16" viewBox="0 0 16 16"><circle cx="6.6" cy="6.6" r="5" fill="none" stroke="#1a1a1a" stroke-width="1.9"/><path d="M10.3 10.3 L14.5 14.5" stroke="#1a1a1a" stroke-width="2.1" stroke-linecap="round"/></svg>
<svg class="a" style="left:741px;top:955px" width="45" height="25" viewBox="0 0 45 25"><path d="M0.5 13.5 C0 18 3 21.5 7 21.5 C10 21.5 13 19 14 15 L14.5 12.2 C10 12 5 12.5 0.5 13.5Z" fill="#e3e6ee" stroke="#a6adb8" stroke-width="0.7"/><path d="M1.5 12.8 C1 6 5 1.2 11 1.2 C16 1.2 19 4.5 18.8 10 L18 12.5 C14 12 6 12.2 1.5 12.8Z" fill="#14235e"/><path d="M6 12.8 C6.5 17 8 20 11.5 21.2" fill="none" stroke="#111" stroke-width="1.1"/><path d="M14.5 12.5 L14.5 18" stroke="#111" stroke-width="0.9"/><path d="M10 21.2 L31.5 6.2 L34.3 9.2 L13.2 24 Z" fill="#f0923a"/><path d="M32.2 7 L38.8 3 L39.8 4.6 L33.6 8.6Z" fill="#e8201c"/><circle cx="33.4" cy="18" r="4.6" fill="#e5221e"/><path d="M30.2 15 L36.4 21.2" stroke="#e4e9f0" stroke-width="2.2"/></svg>
<!-- folder -->
<svg class="a" style="left:802px;top:955px" width="26" height="24" viewBox="0 0 26 24"><path d="M0 2 Q0 0 2 0 H8 L10 2 H24 Q26 2 26 4 V21 Q26 23 24 23 H2 Q0 23 0 21Z" fill="#e8901a"/><path d="M0 6 H26 V21 Q26 23 24 23 H2 Q0 23 0 21Z" fill="#f6a832"/><rect x="5" y="14" width="16" height="9" rx="1.5" fill="#1f4fb0"/></svg>
<!-- edge -->
<svg class="a" style="left:847px;top:955px" width="25" height="25" viewBox="0 0 25 25"><defs><clipPath id="ec"><circle cx="12" cy="12" r="12"/></clipPath></defs><g clip-path="url(#ec)"><rect x="0" y="0" width="25" height="25" fill="#0a4fd2"/><path d="M0 0 H25 V13 C23 17 19 17.5 17 16 C16 13.5 16 10.5 12 9.8 C7 9 3.5 10.5 0 12Z" fill="#0a6ae8"/><path d="M17.5 2 C22 4 25 8 25 12 V16 C23 17.5 20 18 17.5 17 C18.5 12 18.5 6 17.5 2Z" fill="#1f6b6a"/><path d="M8 12.5 C10 10.8 14 11 15 13.5 C16 16 16.5 17.5 19 18 C21 18.3 23 18 24 17 C22.5 22 17 25 12 25 C10 25 8 23 7.5 20 C7 17 7 14 8 12.5Z" fill="#001766"/><path d="M11.5 11.8 C13.5 11.2 15 12.5 15.3 14.5 C15.6 16.5 16.5 17.8 18.5 18.6 C16 19.4 12.5 19 11 17 C9.8 15.3 10 12.6 11.5 11.8Z" fill="#b8c2e6"/></g></svg>
<!-- wps -->
<svg class="a" style="left:891px;top:955px" width="26" height="25" viewBox="0 0 26 25"><circle cx="12" cy="13" r="12" fill="#d42040"/><path d="M0.5 11 C2 4 8 1 14 1.5 L20 8 C12 6 5 8 0.5 11Z" fill="#7a3a9a"/><path d="M5 9 L8 19 L12 12 L16 19 L19 9" fill="none" stroke="#fff" stroke-width="2.6" stroke-linejoin="round"/><rect x="17" y="0" width="9" height="9" rx="2.5" fill="#c86a2a"/><path d="M20 7 V2.2 H22.3 A1.5 1.5 0 0 1 22.3 5.2 H20" fill="none" stroke="#fff" stroke-width="1.2"/></svg>
<div class="a" style="left:901px;top:983px;width:6px;height:3px;border-radius:2px;background:#4a5060"></div>
<!-- sticky -->
<svg class="a" style="left:936px;top:956px" width="22" height="22" viewBox="0 0 22 22"><rect x="0" y="0" width="22" height="22" rx="1" fill="#0e0f12"/><path d="M11 21 L21 11 V21Z" fill="#f39c12"/></svg>
<div class="a" style="left:943px;top:983px;width:6px;height:3px;border-radius:2px;background:#4a5060"></div>
<!-- chrome active -->
<div class="a" style="left:972px;top:948px;width:38px;height:38px;border-radius:5px;background:#cfd8ee"></div>
<svg class="a" style="left:978px;top:955px" width="26" height="25" viewBox="0 0 26 25"><circle cx="12" cy="12.5" r="11.8" fill="#188038"/><path d="M12 0.7 A11.8 11.8 0 0 1 22.2 6.6 H12 A5.9 5.9 0 0 0 6.9 9.5 L1.9 6.5 A11.8 11.8 0 0 1 12 0.7Z" fill="#d93025"/><path d="M22.2 6.6 A11.8 11.8 0 0 1 12.5 24.3 L17.1 15.5 A5.9 5.9 0 0 0 17.1 9.5Z" fill="#f2a600"/><circle cx="12" cy="12.5" r="5.5" fill="#fff"/><circle cx="12" cy="12.5" r="4.3" fill="#1a5fd0"/></svg>
<div class="a" style="left:991px;top:950px;width:17px;height:17px;border-radius:50%;background:#d91a00;color:#f6d0b0;font-size:10px;line-height:17px;text-align:center">K</div>
<div class="a" style="left:983px;top:983px;width:16px;height:3px;border-radius:2px;background:#1a4fd0"></div>
<!-- tray -->
<svg class="a" style="left:1272px;top:963px" width="12" height="8" viewBox="0 0 12 8"><path d="M1 6.8 L6 1.5 L11 6.8" fill="none" stroke="#1a1a1a" stroke-width="1.6"/></svg>
<svg class="a" style="left:1346px;top:960px" width="16" height="13" viewBox="0 0 16 13"><path d="M1 5 A10 10 0 0 1 15 5" fill="none" stroke="#6a6f78" stroke-width="1.4"/><path d="M3.2 7.4 A7 7 0 0 1 12.8 7.4" fill="none" stroke="#1a1a1a" stroke-width="1.5"/><path d="M5.4 9.6 A4 4 0 0 1 10.6 9.6" fill="none" stroke="#1a1a1a" stroke-width="1.5"/><circle cx="8" cy="11.6" r="1.3" fill="#1a1a1a"/></svg>
<svg class="a" style="left:1370px;top:960px" width="17" height="13" viewBox="0 0 17 13"><path d="M1 4.5 H3.8 L7.5 1 V12 L3.8 8.5 H1Z" fill="none" stroke="#1a1a1a" stroke-width="1.3" stroke-linejoin="round"/><path d="M10 4 A3.5 3.5 0 0 1 10 9" fill="none" stroke="#1a1a1a" stroke-width="1.3"/><path d="M12.5 1.8 A6.5 6.5 0 0 1 12.5 11.2" fill="none" stroke="#8a8f98" stroke-width="1.3"/></svg>
<svg class="a" style="left:1394px;top:961px" width="17" height="12" viewBox="0 0 17 12"><rect x="0.8" y="0.8" width="13.4" height="10.2" rx="2" fill="none" stroke="#1a1a1a" stroke-width="1.5"/><rect x="3" y="3" width="3.4" height="5.8" fill="#1a1a1a"/><rect x="14.6" y="3.8" width="1.8" height="4.2" rx=".6" fill="#1a1a1a"/></svg>
<div class="a" style="left:1500px;top:959px;width:16px;height:16px;border-radius:50%;background:#0a3aa8;color:#fff;font-size:10px;line-height:16px;text-align:center">2</div>

<div id="t72" class="t" style="left:608.30px;top:960.05px;font-size:14px;color:#262626;font-weight:normal;letter-spacing:-0.674px;-webkit-text-stroke:0.2px #262626;">Search</div>
<div id="t73" class="t" style="left:1304.60px;top:954.49px;font-size:11px;color:#1a1a1a;font-weight:normal;letter-spacing:-0.240px;-webkit-text-stroke:0.2px #1a1a1a;">ENG</div>
<div id="t74" class="t" style="left:1308.78px;top:970.29px;font-size:11px;color:#1a1a1a;font-weight:normal;letter-spacing:1.000px;-webkit-text-stroke:0.2px #1a1a1a;">IN</div>
<div id="t75" class="t" style="left:1437.90px;top:953.59px;font-size:11px;color:#1a1a1a;font-weight:normal;letter-spacing:0.483px;-webkit-text-stroke:0.2px #1a1a1a;">09:27 AM</div>
<div id="t76" class="t" style="left:1427.00px;top:969.19px;font-size:11px;color:#1a1a1a;font-weight:normal;letter-spacing:0.539px;-webkit-text-stroke:0.2px #1a1a1a;">06-10-2023</div>
</body></html>
